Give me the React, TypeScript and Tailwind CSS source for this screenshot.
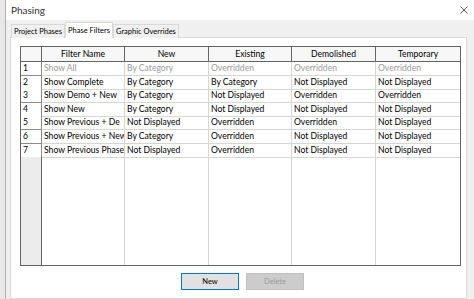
const columns = ["Filter Name", "New", "Existing", "Demolished", "Temporary"];

const rows: string[][] = [
  ["Show All", "By Category", "Overridden", "Overridden", "Overridden"],
  ["Show Complete", "By Category", "By Category", "Not Displayed", "Not Displayed"],
  ["Show Demo + New", "By Category", "Not Displayed", "Overridden", "Overridden"],
  ["Show New", "By Category", "Not Displayed", "Not Displayed", "Not Displayed"],
  ["Show Previous + De", "Not Displayed", "Overridden", "Overridden", "Not Displayed"],
  ["Show Previous + New", "By Category", "Overridden", "Not Displayed", "Not Displayed"],
  ["Show Previous Phase", "Not Displayed", "Overridden", "Not Displayed", "Not Displayed"],
];

const gridCols = "grid grid-cols-[21px_83px_84px_83px_84px_84px]";

function Tab({ label, active = false }: { label: string; active?: boolean }) {
  return (
    <div
      className={
        active
          ? "h-[16px] border border-b-0 border-[#d9d9d9] bg-white px-[2px] text-[7.5px] leading-[15px] text-black"
          : "mt-[2px] h-[14px] border border-b-0 border-[#d9d9d9] bg-[#f0f0f0] px-[2px] text-[7.5px] leading-[13px] text-black"
      }
    >
      {label}
    </div>
  );
}

export default function App() {
  return (
    <div
      className="flex h-[299px] w-[474px] overflow-hidden bg-[#e6e6e6] text-[8.6px]"
      style={{ fontFamily: 'Lato, "Noto Sans", sans-serif' }}
    >
      <div className="w-[6px] border-r border-[#b0b0b0] bg-[#e8e8e8]" />
      <div className="flex flex-1 flex-col">
        {/* title bar */}
        <div className="flex h-[20px] items-center justify-between bg-white pl-[5px] pr-[5px]">
          <span className="text-[10px] text-[#333]">Phasing</span>
          <svg width="8" height="8" viewBox="0 0 8 8" className="mr-[1px]">
            <path d="M0.5 0.5 L7.5 7.5 M7.5 0.5 L0.5 7.5" stroke="#444" strokeWidth="0.9" />
          </svg>
        </div>

        {/* dialog body */}
        <div className="flex flex-1 flex-col bg-[#f0f0f0] pl-[4px] pr-[7px] pt-[2px]">
          <div className="relative z-10 -mb-px flex pl-[1px]">
            <Tab label="Project Phases" />
            <Tab label="Phase Filters" active />
            <Tab label="Graphic Overrides" />
          </div>

          <div className="flex flex-1 flex-col border border-[#d9d9d9] bg-white pl-[9px] pr-[4px] pt-[8px]">
            {/* table */}
            <div className="flex h-[220px] w-[441px] flex-col border border-[#646464]">
              <div className={`${gridCols} h-[15px] border-b border-[#646464] bg-[#f7f7f7]`}>
                <div className="border-r border-[#646464] bg-[#f7f7f7]" />
                {columns.map((c, i) => (
                  <div
                    key={c}
                    className={`text-center leading-[14px] text-black ${i < columns.length - 1 ? "border-r border-[#646464]" : ""}`}
                  >
                    {c}
                  </div>
                ))}
              </div>

              {rows.map((r, ri) => (
                <div key={ri} className={`${gridCols} h-[13.6px]`}>
                  <div className="border-r border-b border-[#8c8c8c] bg-white pl-[2px] leading-[13px] text-black">
                    {ri + 1}
                  </div>
                  {r.map((v, ci) => (
                    <div
                      key={ci}
                      className={`overflow-hidden whitespace-nowrap border-b border-[#d6d6d6] pl-[2px] leading-[13px] ${ci < r.length - 1 ? "border-r" : ""} ${ri === 0 ? "text-[#9a9a9a]" : "text-black"}`}
                    >
                      {v}
                    </div>
                  ))}
                </div>
              ))}

              <div className={`${gridCols} flex-1`}>
                <div className="border-r border-[#646464] bg-[#ececec]" />
                {columns.map((c, i) => (
                  <div key={c} className={i < columns.length - 1 ? "border-r border-[#d6d6d6]" : ""} />
                ))}
              </div>
            </div>

            {/* buttons */}
            <div className="mt-[7px] flex gap-[7px] pl-[161px]">
              <button className="h-[17px] w-[58px] border border-[#0078d7] bg-[#e1e1e1] text-[7.5px] leading-[15px] text-black">
                New
              </button>
              <button className="h-[17px] w-[58px] border border-[#bfbfbf] bg-[#cccccc] text-[7.5px] leading-[15px] text-[#9a9a9a]">
                Delete
              </button>
            </div>
          </div>
        </div>
      </div>
    </div>
  );
}
